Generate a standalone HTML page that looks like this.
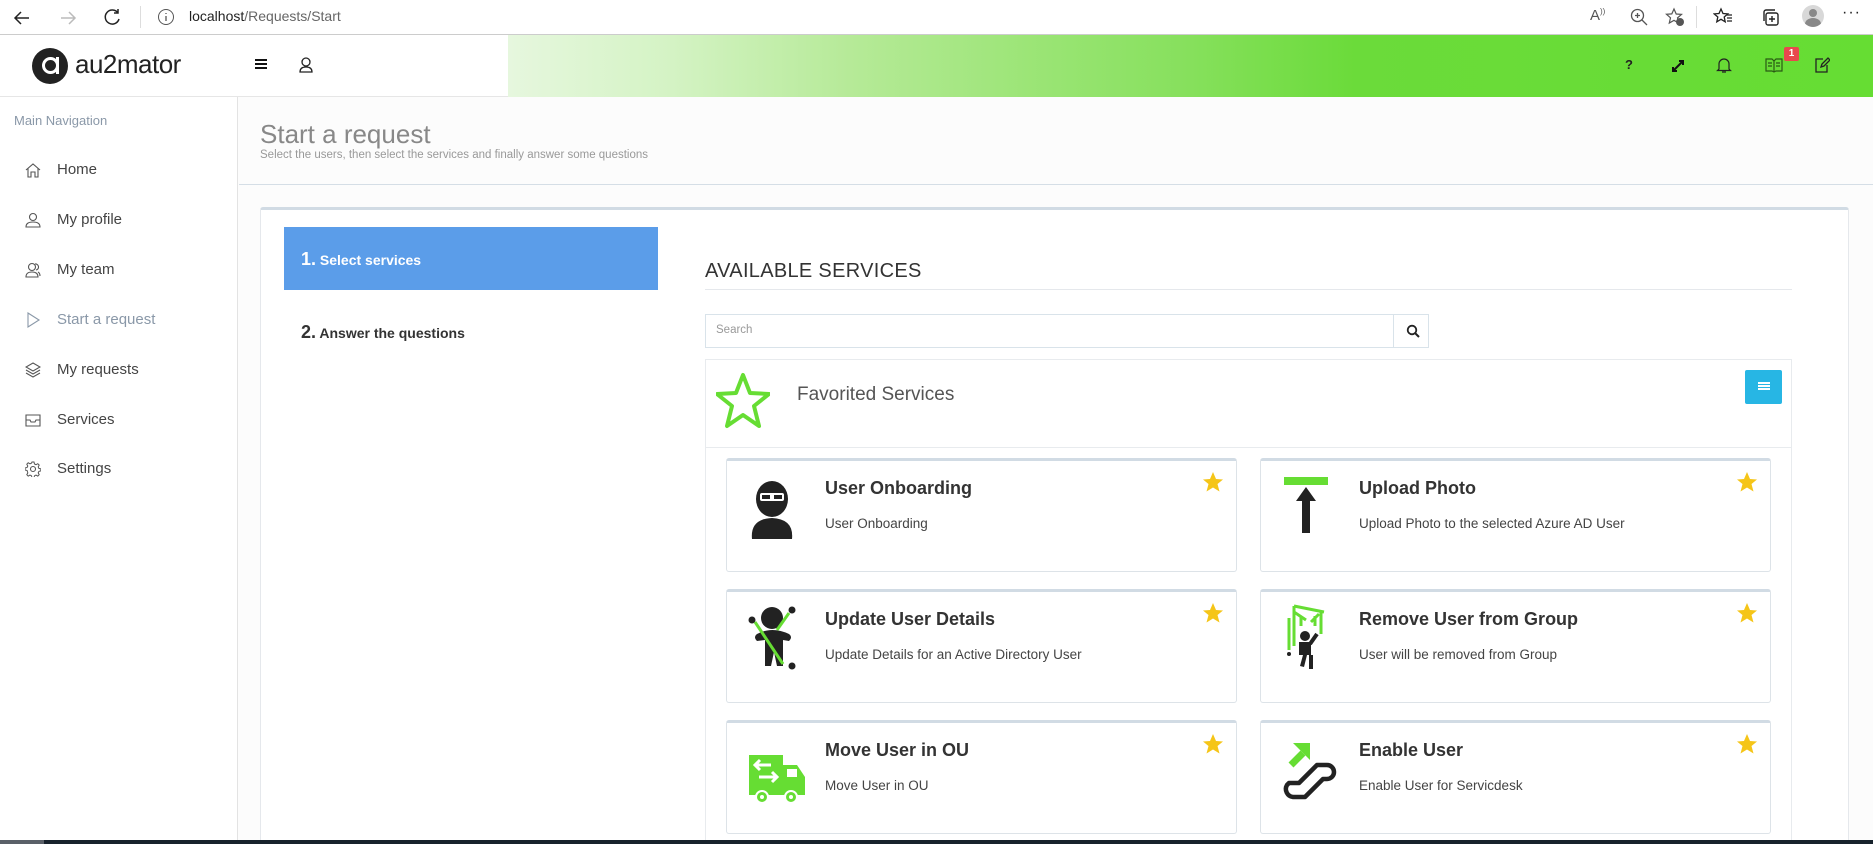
<!DOCTYPE html>
<html><head><meta charset="utf-8"><style>
*{box-sizing:border-box;margin:0;padding:0}
body{width:1873px;height:844px;overflow:hidden;font-family:"Liberation Sans",sans-serif;background:#fcfcfc;position:relative;color:#333}
.abs{position:absolute}
#browser{left:0;top:0;width:1873px;height:35px;background:#fff;border-bottom:1px solid #ccc}
#hdr{left:0;top:35px;width:1873px;height:62px;background:#fff;border-bottom:1px solid #e6e6e6}
#green{left:508px;top:35px;width:1365px;height:62px;background:linear-gradient(90deg,#e6f7de 0%,#d4f3c4 12%,#b6ea98 25%,#9ce577 38%,#86e05c 50%,#6bdb3a 62%,#66dd33 100%)}
#side{left:0;top:97px;width:238px;height:747px;background:#fff;border-right:1px solid #e3e3e3}
.nav{position:absolute;left:0;width:238px;height:30px;font-size:15px;color:#444;line-height:30px}
.nav svg{position:absolute;left:25px;top:7px}
.nav span{position:absolute;left:57px}
.card{position:absolute;width:511px;height:114px;background:#fff;border:1px solid #dde3e8;border-top:3px solid #d1dbe4;border-radius:3px}
.card .t{position:absolute;left:98px;top:17px;font-size:18px;font-weight:bold;color:#333}
.card .d{position:absolute;left:98px;top:55px;font-size:13.5px;color:#444}
.card .st{position:absolute;right:12px;top:10px}
.card .ic{position:absolute;left:20px;top:12px}
</style></head><body>
<div id="browser" class="abs">
 <svg class="abs" style="left:12px;top:8px" width="20" height="20" viewBox="0 0 20 20"><path d="M17 10H4M9 4l-6 6 6 6" fill="none" stroke="#222" stroke-width="1.5"/></svg>
 <svg class="abs" style="left:58px;top:8px" width="20" height="20" viewBox="0 0 20 20"><path d="M3 10h13M11 4l6 6-6 6" fill="none" stroke="#bbb" stroke-width="1.5"/></svg>
 <svg class="abs" style="left:103px;top:7px" width="20" height="20" viewBox="0 0 20 20"><path d="M15 6a7 7 0 1 0 1 6M15 2v4h-4" fill="none" stroke="#222" stroke-width="1.5"/></svg>
 <div class="abs" style="left:140px;top:6px;width:1px;height:22px;background:#ddd"></div>
 <svg class="abs" style="left:157px;top:8px" width="18" height="18" viewBox="0 0 18 18"><circle cx="9" cy="9" r="7.5" fill="none" stroke="#555"/><path d="M9 8v5M9 5v1" stroke="#555" stroke-width="1.3"/></svg>
 <div class="abs" style="left:189px;top:8px;font-size:14px;color:#222">localhost<span style="color:#666">/Requests/Start</span></div>
 <div class="abs" style="left:1590px;top:7px;font-size:15px;color:#555">A<sup style="font-size:8px">))</sup></div>
 <svg class="abs" style="left:1630px;top:8px" width="18" height="18" viewBox="0 0 18 18"><circle cx="7.5" cy="7.5" r="6" fill="none" stroke="#555" stroke-width="1.3"/><path d="M12 12l5 5M5 7.5h5M7.5 5v5" stroke="#555" stroke-width="1.3"/></svg>
 <svg class="abs" style="left:1665px;top:7px" width="20" height="20" viewBox="0 0 20 20"><path d="M9 2l2.2 5 5.3.4-4 3.5 1.2 5.2L9 13.3 4.3 16l1.2-5.2-4-3.5 5.3-.4z" fill="none" stroke="#555" stroke-width="1.2"/><circle cx="15" cy="15" r="4" fill="#555"/></svg>
 <div class="abs" style="left:1696px;top:6px;width:1px;height:22px;background:#ddd"></div>
 <svg class="abs" style="left:1713px;top:7px" width="20" height="20" viewBox="0 0 20 20"><path d="M8 2l2 4.5 4.8.4-3.6 3.1 1 4.8L8 12.3 3.8 14.8l1-4.8L1.2 6.9 6 6.5z" fill="none" stroke="#222" stroke-width="1.3"/><path d="M14 8h5M14 11h5M14 14h5" stroke="#222" stroke-width="1.3"/></svg>
 <svg class="abs" style="left:1760px;top:7px" width="20" height="20" viewBox="0 0 20 20"><rect x="6" y="6" width="12" height="12" rx="2" fill="none" stroke="#222" stroke-width="1.4"/><path d="M4 14V5a2 2 0 0 1 2-2h9M12 9v6M9 12h6" fill="none" stroke="#222" stroke-width="1.4"/></svg>
 <div class="abs" style="left:1802px;top:5px;width:22px;height:22px;border-radius:50%;background:#d8d8d8;overflow:hidden"><div class="abs" style="left:7px;top:4px;width:8px;height:8px;border-radius:50%;background:#888"></div><div class="abs" style="left:3px;top:13px;width:16px;height:12px;border-radius:50%;background:#888"></div></div>
 <div class="abs" style="left:1842px;top:4px;font-size:16px;color:#222;letter-spacing:1px">···</div>
</div>
<div id="hdr" class="abs">
 <div class="abs" style="left:32px;top:13px;width:36px;height:36px;border-radius:50%;background:#222"><div class="abs" style="left:10px;top:9px;width:17px;height:17px;border:3px solid #fff;border-radius:50%"></div><div class="abs" style="left:24px;top:9px;width:3px;height:17px;background:#fff"></div></div>
 <div class="abs" style="left:75px;top:14px;font-size:26px;color:#222;letter-spacing:-0.5px">au2mator</div>
 <div class="abs" style="left:255px;top:24px;width:12px;height:2px;background:#111;box-shadow:0 4px 0 #111,0 8px 0 #111"></div>
 <svg class="abs" style="left:298px;top:21px" width="16" height="18" viewBox="0 0 16 18"><circle cx="8" cy="6" r="4" fill="none" stroke="#222" stroke-width="1.3"/><path d="M2 16q0-5 6-5t6 5z" fill="none" stroke="#222" stroke-width="1.3"/></svg>
</div>
<div id="green" class="abs">
 <div class="abs" style="left:1117px;top:22px;font-size:13px;font-weight:bold;color:#222">?</div>
 <svg class="abs" style="left:1162px;top:23px" width="16" height="16" viewBox="0 0 16 16"><path d="M3 13L13 3M9 3h4v4M3 9v4h4" fill="none" stroke="#111" stroke-width="2"/></svg>
 <svg class="abs" style="left:1208px;top:21px" width="16" height="18" viewBox="0 0 16 18"><path d="M3 13V8a5 5 0 0 1 10 0v5l1.5 1.5h-13zM6 16h4" fill="none" stroke="#222" stroke-width="1.2"/></svg>
 <svg class="abs" style="left:1257px;top:22px" width="18" height="16" viewBox="0 0 18 16"><path d="M1 2h6l2 2 2-2h6v12h-6l-2 1-2-1H1zM9 4v11M3 6h4M3 9h4M11 6h4M11 9h4" fill="none" stroke="#2a5a14" stroke-width="1.2"/></svg>
 <div class="abs" style="left:1276px;top:12px;width:15px;height:14px;background:#e8484e;color:#fff;font-size:10px;font-weight:bold;text-align:center;line-height:14px;border-radius:2px">1</div>
 <svg class="abs" style="left:1306px;top:21px" width="16" height="18" viewBox="0 0 16 18"><path d="M9 3H2v13h11V9M7 11l1-3 6-6 2 2-6 6z" fill="none" stroke="#222" stroke-width="1.3"/></svg>
</div>
<div id="side" class="abs">
 <div class="abs" style="left:14px;top:16px;font-size:13px;color:#8a98a8">Main Navigation</div>
 <div class="nav" style="top:58px"><svg width="16" height="16" viewBox="0 0 16 16"><path d="M1 8l7-6 7 6M3 6v9h3v-5h4v5h3V6" fill="none" stroke="#555" stroke-width="1.1"/></svg><span>Home</span></div>
 <div class="nav" style="top:108px"><svg width="16" height="16" viewBox="0 0 16 16"><circle cx="8" cy="5" r="3.5" fill="none" stroke="#555" stroke-width="1.1"/><path d="M1 15q0-5 7-5t7 5z" fill="none" stroke="#555" stroke-width="1.1"/></svg><span>My profile</span></div>
 <div class="nav" style="top:158px"><svg width="16" height="16" viewBox="0 0 16 16"><circle cx="7" cy="5" r="3.5" fill="none" stroke="#555" stroke-width="1.1"/><path d="M1 15q0-5 6-5t6 5zM10 2a3 3 0 0 1 1 6M13 10q2 1 2 4" fill="none" stroke="#555" stroke-width="1.1"/></svg><span>My team</span></div>
 <div class="nav" style="top:208px;color:#8a98a8"><svg width="16" height="16" viewBox="0 0 16 16"><path d="M3 1l11 7-11 7z" fill="none" stroke="#8a98a8" stroke-width="1.1"/></svg><span>Start a request</span></div>
 <div class="nav" style="top:258px"><svg width="16" height="16" viewBox="0 0 16 16"><path d="M8 1l7 4-7 4-7-4zM1 8l7 4 7-4M1 11l7 4 7-4" fill="none" stroke="#555" stroke-width="1.1"/></svg><span>My requests</span></div>
 <div class="nav" style="top:308px"><svg width="16" height="16" viewBox="0 0 16 16"><path d="M1 3h14v11H1zM1 8h4l1 2h4l1-2h4" fill="none" stroke="#555" stroke-width="1.1"/></svg><span>Services</span></div>
 <div class="nav" style="top:357px"><svg width="16" height="16" viewBox="0 0 16 16"><circle cx="8" cy="8" r="2.5" fill="none" stroke="#555" stroke-width="1.1"/><path d="M7 1h2l.5 2 1.5.7 1.8-1 1.4 1.4-1 1.8.7 1.5 2 .5v2l-2 .5-.7 1.5 1 1.8-1.4 1.4-1.8-1-1.5.7-.5 2H7l-.5-2-1.5-.7-1.8 1-1.4-1.4 1-1.8L2.1 9.5 0 9V7l2.1-.5.7-1.5-1-1.8 1.4-1.4 1.8 1 1.5-.7z" fill="none" stroke="#555" stroke-width="1"/></svg><span>Settings</span></div>
</div>
<div class="abs" style="left:260px;top:119px;font-size:26px;color:#888">Start a request</div>
<div class="abs" style="left:260px;top:149px;font-size:11.5px;color:#999">Select the users, then select the services and finally answer some questions</div>
<div class="abs" style="left:239px;top:184px;width:1634px;height:1px;background:#d5dee6"></div>
<div class="abs" style="left:260px;top:207px;width:1589px;height:637px;background:#fff;border:1px solid #e5e8ec;border-top:3px solid #d1dbe4;border-radius:3px"></div>
<div class="abs" style="left:284px;top:227px;width:374px;height:63px;background:#5b9de9;color:#fff;font-size:14px;font-weight:bold;padding:22px 0 0 17px"><span style="font-size:18px">1.</span> Select services</div>
<div class="abs" style="left:301px;top:322px;font-size:14px;font-weight:bold;color:#333"><span style="font-size:18px">2.</span> Answer the questions</div>
<div class="abs" style="left:705px;top:260px;font-size:20px;color:#333;letter-spacing:0.3px">AVAILABLE SERVICES</div>
<div class="abs" style="left:705px;top:289px;width:1087px;height:1px;background:#e5e8ec"></div>
<div class="abs" style="left:705px;top:314px;width:724px;height:34px;border:1px solid #d9e3ea;background:#fff"><div class="abs" style="left:10px;top:9px;font-size:11.5px;color:#999">Search</div><div class="abs" style="left:687px;top:-1px;width:1px;height:34px;background:#d9e3ea"></div>
<svg class="abs" style="left:700px;top:9px" width="14" height="14" viewBox="0 0 14 14"><circle cx="6" cy="6" r="4.3" fill="none" stroke="#222" stroke-width="1.8"/><path d="M9 9l4 4" stroke="#222" stroke-width="2"/></svg></div>
<div class="abs" style="left:705px;top:359px;width:1087px;height:485px;border:1px solid #e8ebee;background:#fff"></div>
<div class="abs" style="left:705px;top:447px;width:1087px;height:1px;background:#e8ebee"></div>
<svg class="abs" style="left:716px;top:372px" width="54" height="62" viewBox="0 0 54 62"><path d="M27 3l7 18 19 1-15 12 5 20-16-11-16 11 5-20L1 22l19-1z" fill="none" stroke="#66dd33" stroke-width="4" stroke-linejoin="round"/></svg>
<div class="abs" style="left:797px;top:384px;font-size:19px;color:#555">Favorited Services</div>
<div class="abs" style="left:1745px;top:370px;width:37px;height:34px;background:#27b6e4;border-radius:2px"><div class="abs" style="left:13px;top:12px;width:12px;height:2px;background:#fff;box-shadow:0 3px 0 #fff,0 6px 0 #fff"></div></div>

<div class="card" style="left:726px;top:458px"><svg class="ic" width="50" height="70" viewBox="0 0 50 70"><ellipse cx="25" cy="26" rx="16" ry="18" fill="#222"/><rect x="13" y="20" width="24" height="8" rx="2" fill="#fff"/><rect x="15" y="22" width="8" height="4" fill="#222"/><rect x="27" y="22" width="8" height="4" fill="#222"/><path d="M5 66q-2-20 20-21 22 1 20 21z" fill="#222"/></svg><div class="t">User Onboarding</div><div class="d">User Onboarding</div><svg class="st" width="22" height="22" viewBox="0 0 22 22"><path d="M11 1l3 7 7 .5-5.5 4.5 2 7.5L11 16.5 4.5 20.5l2-7.5L1 8.5 8 8z" fill="#f5c518"/></svg></div>
<div class="card" style="left:1260px;top:458px"><svg class="ic" width="50" height="70" viewBox="0 0 50 70"><rect x="3" y="4" width="44" height="8" fill="#66dd33"/><path d="M25 14l-10 14h6v32h8V28h6z" fill="#222"/></svg><div class="t">Upload Photo</div><div class="d">Upload Photo to the selected Azure AD User</div><svg class="st" width="22" height="22" viewBox="0 0 22 22"><path d="M11 1l3 7 7 .5-5.5 4.5 2 7.5L11 16.5 4.5 20.5l2-7.5L1 8.5 8 8z" fill="#f5c518"/></svg></div>

<div class="card" style="left:726px;top:589px"><svg class="ic" width="52" height="70" viewBox="0 0 52 70"><circle cx="25" cy="14" r="11" fill="#222"/><circle cx="5" cy="16" r="3.5" fill="#222"/><circle cx="45" cy="6" r="3.5" fill="#222"/><circle cx="45" cy="62" r="3.5" fill="#222"/><path d="M10 30q15-8 32 0 4 3 0 7l-6-1v26h-6l-3-14-3 14h-6V36l-8 1q-4-4 0-7z" fill="#222"/><path d="M8 18l28 42M42 9L30 26" stroke="#66dd33" stroke-width="3"/></svg><div class="t">Update User Details</div><div class="d">Update Details for an Active Directory User</div><svg class="st" width="22" height="22" viewBox="0 0 22 22"><path d="M11 1l3 7 7 .5-5.5 4.5 2 7.5L11 16.5 4.5 20.5l2-7.5L1 8.5 8 8z" fill="#f5c518"/></svg></div>
<div class="card" style="left:1260px;top:589px"><svg class="ic" width="50" height="70" viewBox="0 0 50 70"><path d="M13 2l30 6M13 8l12 8M38 10l-8 8M8 14v32M13 2v40M40 8v22M20 12v10M34 12v10" stroke="#66dd33" stroke-width="3" fill="none"/><circle cx="24" cy="32" r="5" fill="#222"/><path d="M18 38h12v13h-4l-3 12-4-1 3-11h-4z" fill="#222"/><path d="M29 40l7-10M30 51v14" stroke="#222" stroke-width="4"/><circle cx="8" cy="50" r="2" fill="#222"/></svg><div class="t">Remove User from Group</div><div class="d">User will be removed from Group</div><svg class="st" width="22" height="22" viewBox="0 0 22 22"><path d="M11 1l3 7 7 .5-5.5 4.5 2 7.5L11 16.5 4.5 20.5l2-7.5L1 8.5 8 8z" fill="#f5c518"/></svg></div>

<div class="card" style="left:726px;top:720px"><svg class="ic" width="60" height="70" viewBox="0 0 60 70"><path d="M2 20h34v10h14l8 12v18H2z" fill="#66dd33"/><rect x="40" y="34" width="10" height="8" fill="#fff"/><circle cx="15" cy="62" r="6" fill="#66dd33" stroke="#fff" stroke-width="2"/><circle cx="15" cy="62" r="2" fill="#fff"/><circle cx="44" cy="62" r="6" fill="#66dd33" stroke="#fff" stroke-width="2"/><circle cx="44" cy="62" r="2" fill="#fff"/><path d="M24 30H8M13 25l-5 5 5 5M12 42h18M25 37l5 5-5 5" stroke="#fff" stroke-width="3" fill="none"/></svg><div class="t">Move User in OU</div><div class="d">Move User in OU</div><svg class="st" width="22" height="22" viewBox="0 0 22 22"><path d="M11 1l3 7 7 .5-5.5 4.5 2 7.5L11 16.5 4.5 20.5l2-7.5L1 8.5 8 8z" fill="#f5c518"/></svg></div>
<div class="card" style="left:1260px;top:720px"><svg class="ic" width="60" height="70" viewBox="0 0 60 70"><path d="M10 30l12-12" stroke="#66dd33" stroke-width="7"/><path d="M12 8h17v17z" fill="#66dd33"/><path d="M12 62a8 8 0 0 1-6-12l2-2h10l18-18h10a7 7 0 0 1 0 14h-4L24 62z" fill="none" stroke="#222" stroke-width="4.5" stroke-linejoin="round"/></svg><div class="t">Enable User</div><div class="d">Enable User for Servicdesk</div><svg class="st" width="22" height="22" viewBox="0 0 22 22"><path d="M11 1l3 7 7 .5-5.5 4.5 2 7.5L11 16.5 4.5 20.5l2-7.5L1 8.5 8 8z" fill="#f5c518"/></svg></div>

<div class="abs" style="left:0;top:840px;width:1873px;height:4px;background:#17222c"></div>
<div class="abs" style="left:0;top:840px;width:44px;height:4px;background:#5a6068"></div>
</body></html>
